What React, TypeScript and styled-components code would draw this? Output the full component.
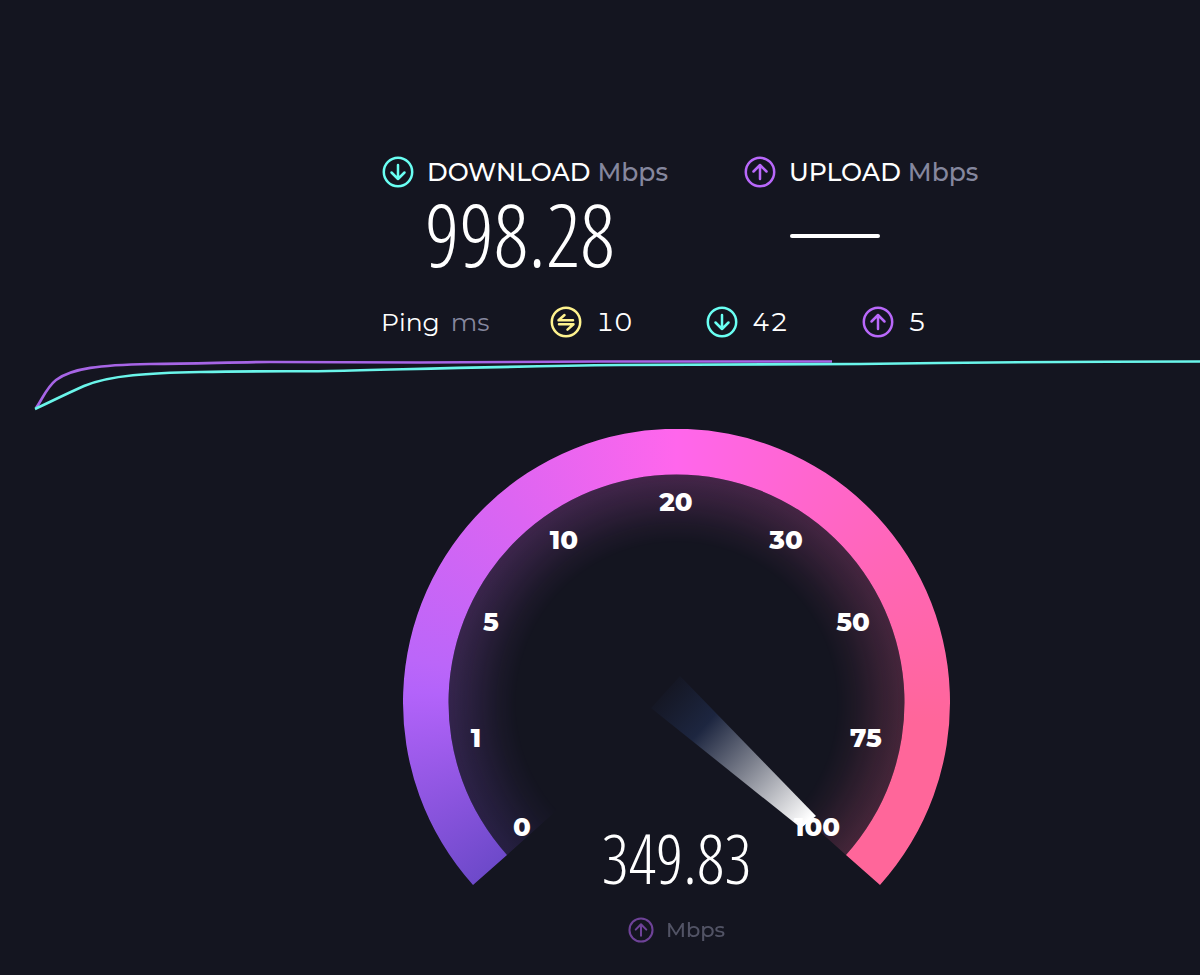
import React from 'react';
import styled, { createGlobalStyle } from 'styled-components';

const colors = {
  page: '#141520',
  text: '#ffffff',
  muted: '#85879e',
  download: '#6afff3',
  upload: '#b968fa',
  idle: '#fff38e',
};

const GlobalStyle = createGlobalStyle`
  * { box-sizing: border-box; }
  body {
    margin: 0;
    background: ${colors.page};
    color: ${colors.text};
    font-family: Montserrat, Inter, sans-serif;
  }
`;

const Page = styled.main`
  min-height: 100vh;
  padding-top: 155px;
  overflow: hidden;
`;

/* The results column sits right of the window's centre. */
const Centered = styled.div`
  display: flex;
  justify-content: center;
  padding-left: 153px;
`;

const Results = styled.section`
  width: 591px;
`;

const Speeds = styled.div`
  display: grid;
  grid-template-columns: 362px 1fr;
`;

const SpeedTitle = styled.h2`
  display: flex;
  align-items: center;
  margin: 0;
  height: 33px;
  padding-left: 1px;
  font-size: 25px;
  font-weight: 500;
  line-height: 34px;
  white-space: nowrap;
`;

const TitleText = styled.span`
  margin: 0 7px 0 13px;
`;

const Unit = styled.span<{ $weight?: number }>`
  color: ${colors.muted};
  font-weight: ${(p) => p.$weight ?? 500};
`;

const SpeedValue = styled.div<{ $size: number; $height: number }>`
  display: flex;
  align-items: center;
  height: ${(p) => p.$height}px;
  font-family: 'Open Sans Condensed Light', 'Roboto Condensed', sans-serif;
  font-size: ${(p) => p.$size}px;
  font-weight: 300;
  line-height: ${(p) => p.$height}px;
`;

const ResultValue = styled(SpeedValue)`
  padding-left: 44px;
`;

const Dash = styled.span`
  width: 90px;
  height: 4px;
  margin: 4px 0 0 3px;
  border-radius: 2px;
  background: ${colors.text};
`;

const PingRow = styled.div`
  display: grid;
  grid-template-columns: 169px 156px 156px 1fr;
  align-items: center;
  height: 34px;
  margin-top: 26px;
  font-size: 25px;
  line-height: 34px;
`;

const PingLabel = styled.span`
  display: flex;
  gap: 11px;
`;

const PingStat = styled.span`
  display: flex;
  align-items: center;
  gap: 14px;
  font-size: 26px;
  font-variant-numeric: tabular-nums;
`;

const Graph = styled.svg`
  display: block;
  width: 100%;
  height: 80px;
  margin-top: 1px;
`;

const GaugeArea = styled(Centered)`
  margin-top: 9px;
`;

const Gauge = styled.section`
  display: grid;
  width: 547px;

  > * {
    grid-area: 1 / 1;
  }
`;

const Dial = styled.svg`
  display: block;
  width: 547px;
  height: 460px;
`;

const DialColors = styled.div<{ $soft?: boolean }>`
  width: 547px;
  height: 547px;
  opacity: ${(p) => (p.$soft ? 0.21 : 1)};
  background: conic-gradient(
    from 225deg,
    #6b46c8 0deg,
    #6f4acb 4deg,
    #b363fa 47deg,
    #bb66f9 54deg,
    #dc65f2 95deg,
    #ff66ec 135deg,
    #ff66cf 165deg,
    #ff66b8 190deg,
    #ff669a 230deg,
    #ff669a 290deg,
    #6b46c8 340deg
  );
`;

const DialLabel = styled.text`
  fill: ${colors.text};
  font-size: 26px;
  font-weight: 800;
  text-anchor: middle;
`;

const Readout = styled.div`
  display: flex;
  flex-direction: column;
  align-items: center;
  padding-top: 389px;
`;

const ReadoutUnit = styled.div`
  display: flex;
  align-items: center;
  gap: 12px;
  height: 28px;
  margin-top: 18px;
  font-size: 21px;
  font-weight: 500;
  line-height: 28px;
  color: ${colors.muted};
  opacity: 0.55;
`;

type IconKind = 'down' | 'up' | 'swap';

const iconPaths: Record<IconKind, string> = {
  down: 'M16 9v14M9.500 16.500l6.500 6.500 6.500-6.500',
  up: 'M16 23V9M9.500 15.500l6.500-6.500 6.500 6.500',
  swap: 'M14.500 9L8.500 14.300H23M9 18.300H23.500L17.500 23.600',
};

const iconColors: Record<IconKind, string> = {
  down: colors.download,
  up: colors.upload,
  swap: colors.idle,
};

function StatIcon({ kind, size = 32 }: { kind: IconKind; size?: number }) {
  return (
    <svg width={size} height={size} viewBox="0 0 32 32" fill="none" stroke={iconColors[kind]} strokeWidth="2.5" aria-hidden="true">
      <circle cx="16" cy="16" r="14.2" />
      <path d={iconPaths[kind]} strokeLinecap="round" strokeLinejoin="round" />
    </svg>
  );
}

const pings: { kind: IconKind; value: number }[] = [
  { kind: 'swap', value: 10 },
  { kind: 'down', value: 42 },
  { kind: 'up', value: 5 },
];

const marks = [
  { label: '0', x: 119, y: 407 },
  { label: '1', x: 73, y: 318 },
  { label: '5', x: 88, y: 202 },
  { label: '10', x: 161, y: 120 },
  { label: '20', x: 273, y: 82 },
  { label: '30', x: 383, y: 120 },
  { label: '50', x: 450, y: 202 },
  { label: '75', x: 463, y: 318 },
  { label: '100', x: 414, y: 407 },
];

function SpeedGraph() {
  return (
    <Graph viewBox="0 0 1200 80" preserveAspectRatio="none" fill="none" aria-hidden="true">
      <path
        d="M36 68C42 60 46 48 56 40C72 28 100 25 150 24C200 24 230 22 270 22L420 22.500L600 21.500H832"
        stroke="#a765e6"
        strokeWidth="2.600"
      />
      <path
        d="M35 69C52 61 66 54 84 46C110 35 150 33 200 32C260 31 300 31.500 330 31C420 29 500 26.500 620 25C720 24 800 24.500 860 24C960 22.500 1050 21.500 1200 21.500"
        stroke="#6af5ea"
        strokeWidth="2.600"
      />
    </Graph>
  );
}

function SpeedDial() {
  return (
    <Dial viewBox="0 0 547 460" role="img" aria-label="Upload speed gauge">
      <defs>
        <clipPath id="ring">
          <path d="M70 456A273.500 273.500 0 1 1 477 456L443 426A228 228 0 1 0 104 426Z" />
        </clipPath>
        <clipPath id="face">
          <path d="M273.500 274L104 426A228 228 0 1 1 443 426Z" />
        </clipPath>
        <radialGradient id="glow" gradientUnits="userSpaceOnUse" cx="273.500" cy="274" r="228">
          <stop offset="0.700" stopColor="#fff" stopOpacity="0" />
          <stop offset="0.780" stopColor="#fff" stopOpacity="0.200" />
          <stop offset="0.900" stopColor="#fff" stopOpacity="0.650" />
          <stop offset="1" stopColor="#fff" />
        </radialGradient>
        <mask id="glowMask">
          <rect width="547" height="460" fill="url(#glow)" />
        </mask>
        <linearGradient id="needle" gradientUnits="userSpaceOnUse" x1="258" y1="256" x2="404" y2="392">
          <stop offset="0" stopColor="#1b2540" stopOpacity="0" />
          <stop offset="0.300" stopColor="#1d2640" />
          <stop offset="0.600" stopColor="#7c808d" />
          <stop offset="0.850" stopColor="#cfd0d4" />
          <stop offset="1" stopColor="#fff" />
        </linearGradient>
      </defs>
      <g clipPath="url(#face)">
        <g mask="url(#glowMask)">
          <foreignObject width="547" height="460">
            <DialColors $soft />
          </foreignObject>
        </g>
      </g>
      <g clipPath="url(#ring)">
        <foreignObject width="547" height="460">
          <DialColors />
        </foreignObject>
      </g>
      <path d="M277 247L413 387L398 399L248 279Z" fill="url(#needle)" />
      {marks.map((m) => (
        <DialLabel key={m.label} x={m.x} y={m.y}>
          {m.label}
        </DialLabel>
      ))}
    </Dial>
  );
}

export default function App() {
  return (
    <>
      <GlobalStyle />
      <Page>
        <Centered>
          <Results>
            <Speeds>
              <div>
                <SpeedTitle>
                  <StatIcon kind="down" />
                  <TitleText>DOWNLOAD</TitleText>
                  <Unit>Mbps</Unit>
                </SpeedTitle>
                <ResultValue $size={86} $height={91}>
                  998.28
                </ResultValue>
              </div>
              <div>
                <SpeedTitle>
                  <StatIcon kind="up" />
                  <TitleText>UPLOAD</TitleText>
                  <Unit>Mbps</Unit>
                </SpeedTitle>
                <ResultValue $size={86} $height={91}>
                  <Dash />
                </ResultValue>
              </div>
            </Speeds>
            <PingRow>
              <PingLabel>
                Ping <Unit $weight={400}>ms</Unit>
              </PingLabel>
              {pings.map((p) => (
                <PingStat key={p.kind}>
                  <StatIcon kind={p.kind} />
                  {p.value}
                </PingStat>
              ))}
            </PingRow>
          </Results>
        </Centered>
        <SpeedGraph />
        <GaugeArea>
          <Gauge>
            <SpeedDial />
            <Readout>
              <SpeedValue $size={68} $height={80}>
                349.83
              </SpeedValue>
              <ReadoutUnit>
                <StatIcon kind="up" size={26} />
                Mbps
              </ReadoutUnit>
            </Readout>
          </Gauge>
        </GaugeArea>
      </Page>
    </>
  );
}
